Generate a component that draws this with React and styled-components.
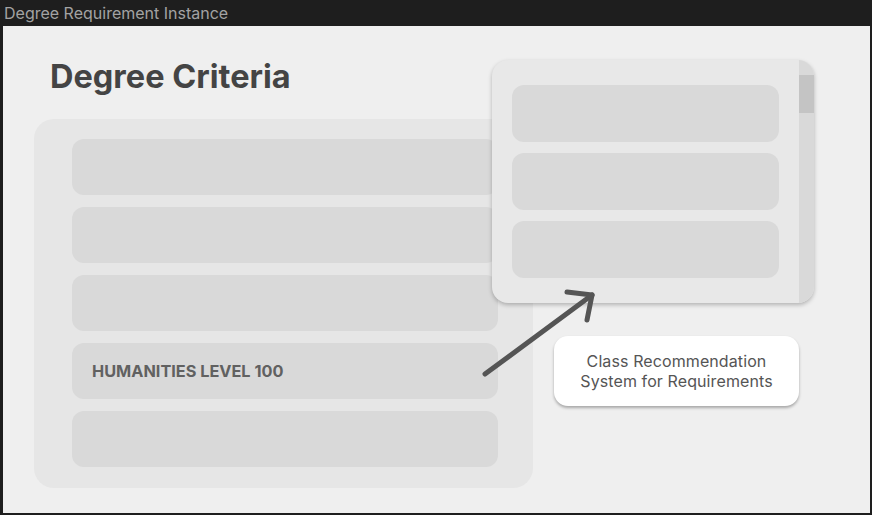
import React from "react";
import styled, { createGlobalStyle } from "styled-components";

const GlobalStyle = createGlobalStyle`
  html, body {
    margin: 0;
    padding: 0;
    background: #1e1e1e;
    font-family: Inter, "Noto Sans", "Liberation Sans", sans-serif;
  }
  * { box-sizing: border-box; }
`;

const Window = styled.div`
  width: 872px;
  height: 515px;
  display: flex;
  flex-direction: column;
  background: #1e1e1e;
`;

const TitleBar = styled.div`
  height: 26px;
  line-height: 26px;
  padding-left: 4px;
  font-size: 16px;
  color: #a3a3a3;
  white-space: nowrap;
`;

const Frame = styled.div`
  position: relative;
  flex: 1;
  margin: 0 2px 2px 3px;
  background: #efefef;
  display: flex;
  flex-direction: column;
  align-items: flex-start;
`;

const Heading = styled.h1`
  margin: 32px 0 0 47px;
  font-size: 32.5px;
  line-height: 38px;
  font-weight: 700;
  color: #444444;
`;

const CriteriaCard = styled.div`
  margin: 23px 0 0 31px;
  width: 499px;
  padding: 20px 35px 21px 38px;
  background: #e6e6e6;
  border-radius: 20px;
  display: flex;
  flex-direction: column;
  gap: 12px;
`;

const Row = styled.div`
  height: ${(p) => p.$h || 56}px;
  border-radius: 12px;
  background: #d9d9d9;
  display: flex;
  align-items: center;
  padding-left: 20px;
  font-size: 16.3px;
  font-weight: 700;
  color: #616161;
`;

const Popup = styled.div`
  position: absolute;
  left: 489px;
  top: 34px;
  width: 322px;
  height: 243px;
  border-radius: 16px;
  background: #e8e8e8;
  box-shadow: 0 2px 4px rgba(0, 0, 0, 0.25);
  overflow: hidden;
  display: flex;
`;

const PopupList = styled.div`
  flex: 1;
  padding: 25px 20px;
  display: flex;
  flex-direction: column;
  gap: 11px;
`;

const Scrollbar = styled.div`
  width: 15px;
  background: #d9d9d9;
  padding-top: 15px;
`;

const Thumb = styled.div`
  height: 38px;
  background: #c4c4c4;
`;

const Arrow = styled.svg`
  position: absolute;
  left: 472px;
  top: 259px;
  overflow: visible;
`;

const Callout = styled.div`
  position: absolute;
  left: 551px;
  top: 310px;
  width: 245px;
  height: 70px;
  border-radius: 14px;
  background: #ffffff;
  box-shadow: 0 2px 3px rgba(0, 0, 0, 0.3);
  display: flex;
  align-items: center;
  justify-content: center;
  text-align: center;
  font-size: 16px;
  line-height: 20px;
  letter-spacing: 0.1px;
  color: #555555;
`;

export default function App() {
  return (
    <Window>
      <GlobalStyle />
      <TitleBar>Degree Requirement Instance</TitleBar>
      <Frame>
        <Heading>Degree Criteria</Heading>
        <CriteriaCard>
          <Row />
          <Row />
          <Row />
          <Row>HUMANITIES LEVEL 100</Row>
          <Row />
        </CriteriaCard>
        <Popup>
          <PopupList>
            <Row $h={57} />
            <Row $h={57} />
            <Row $h={57} />
          </PopupList>
          <Scrollbar>
            <Thumb />
          </Scrollbar>
        </Popup>
        <Arrow width="125" height="100" viewBox="0 0 125 100">
          <g fill="none" stroke="#555555" strokeWidth="5" strokeLinecap="round" strokeLinejoin="round">
            <path d="M10 89 L117 10" />
            <path d="M92 7 L117 10 L112 35" />
          </g>
        </Arrow>
        <Callout>
          Class Recommendation
          <br />
          System for Requirements
        </Callout>
      </Frame>
    </Window>
  );
}
